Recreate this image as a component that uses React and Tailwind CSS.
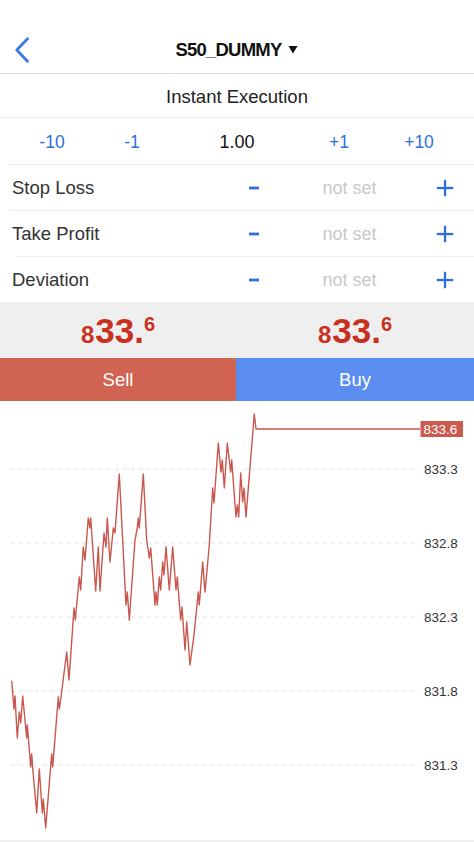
import React from "react";

const chartPoints = [
  [11.7, 680.7], [14, 709], [15, 696], [17.3, 738], [19.3, 712], [20.7, 723], [22.7, 696],
  [25, 720], [26.7, 738], [27.3, 725], [30.7, 767], [31.7, 754], [32.7, 768], [36.7, 813],
  [39.3, 769], [42.3, 813], [43.3, 799], [45.7, 828], [51.7, 754], [52.7, 767], [58.3, 697],
  [59.3, 709], [61, 697], [66.7, 652], [69, 680], [74, 608], [75.3, 620], [79.3, 577],
  [80.7, 590], [83.3, 547], [85, 560], [88.3, 518], [90, 528], [90.7, 518], [95.7, 591],
  [98.3, 547], [100, 591], [104, 533], [106, 547], [107.3, 518], [110, 562], [113.3, 528],
  [115, 533], [119.3, 474], [126, 605], [127.3, 592], [129.3, 620], [135, 540], [137.3, 528],
  [138.3, 518], [139.3, 528], [143.3, 474], [146.7, 540], [149.3, 558], [150.7, 548],
  [155, 605], [156, 592], [157.3, 605], [159.3, 577], [160.7, 590], [162.7, 562], [164, 575],
  [166, 547], [169.3, 590], [172.7, 547], [176, 590], [177.3, 577], [180.7, 620], [182, 607],
  [185, 650], [186.7, 622], [190, 665], [194, 635], [195.3, 622], [198.3, 592], [199.3, 605],
  [202.7, 562], [205, 592], [209.3, 545], [212.7, 488], [214, 503], [218.3, 443], [221, 472],
  [222.3, 460], [224.3, 488], [227.3, 443], [230.7, 472], [231.7, 460], [236, 517],
  [237.3, 505], [238.7, 517], [240.7, 473], [242.7, 502], [244, 488], [246, 517],
  [254.3, 414], [256, 429], [420, 429],
];

const gridLevels = [
  { y: 469, label: "833.3" },
  { y: 543, label: "832.8" },
  { y: 617, label: "832.3" },
  { y: 691, label: "831.8" },
  { y: 765, label: "831.3" },
];

const Minus = () => (
  <svg width="12" height="4" viewBox="0 0 12 4">
    <rect x="1" y="0.6" width="10" height="2.8" fill="#2f6fe0" />
  </svg>
);

const Plus = () => (
  <svg width="18" height="18" viewBox="0 0 18 18">
    <rect x="0.8" y="7.9" width="16.4" height="2.3" fill="#2f6fe0" />
    <rect x="7.9" y="0.8" width="2.3" height="16.4" fill="#2f6fe0" />
  </svg>
);

const LevelRow = ({ label, line }) => (
  <>
    <div className={`h-px bg-[#eeeeee] ${line}`} />
    <div className="h-[45px] grid grid-cols-[1fr_40px_151px_40px] items-center pl-[12px] pr-[9px] pt-[1px]">
      <span className="text-[18.5px] text-[#333333]">{label}</span>
      <span className="flex justify-center">
        <Minus />
      </span>
      <span className="text-center text-[18px] text-[#c8c8c8]">not set</span>
      <span className="flex justify-center">
        <Plus />
      </span>
    </div>
  </>
);

const Price = () => (
  <div className="flex items-baseline justify-center text-[#c9311f] font-bold leading-none">
    <span className="text-[24px] leading-none">8</span>
    <span className="text-[35px] leading-none ml-[1px]">33.</span>
    <span className="text-[20px] leading-none self-start mt-[1px]">6</span>
  </div>
);

const App = () => {
  const pts = chartPoints.map((p) => p.join(",")).join(" ");
  return (
    <div className="w-[474px] h-[842px] bg-white overflow-hidden font-['Liberation_Sans',Arial,sans-serif]">
      <div className="h-[26px]" />
      <header className="h-[47px] grid grid-cols-[1fr_auto_1fr] items-center">
        <div className="pl-[14px] flex items-center">
          <svg width="16" height="26" viewBox="0 0 16 26">
            <path d="M13.5 1.8 L2.8 13 L13.5 24.2" fill="none" stroke="#3a7be8" strokeWidth="2.8" strokeLinecap="round" strokeLinejoin="round" />
          </svg>
        </div>
        <div className="flex items-center gap-[7px]">
          <span className="text-[18.5px] font-bold tracking-[-0.8px] text-[#111111]">S50_DUMMY</span>
          <svg width="10" height="9" viewBox="0 0 10 9">
            <path d="M0.5 1 L9.5 1 L5 8.5 Z" fill="#111111" />
          </svg>
        </div>
        <div />
      </header>
      <div className="h-px bg-[#dcdcdc]" />
      <div className="h-[43px] flex items-center justify-center pt-[2px] text-[18.5px] text-[#222222]">
        Instant Execution
      </div>
      <div className="h-px bg-[#f0f0f0]" />
      <div className="h-[46px] grid grid-cols-[104px_56px_154px_50px_110px] items-center text-center text-[17.5px] pt-[3px]">
        <span className="text-[#2f6fe0]">-10</span>
        <span className="text-[#2f6fe0]">-1</span>
        <span className="text-[#111111] text-[18px]">1.00</span>
        <span className="text-[#2f6fe0]">+1</span>
        <span className="text-[#2f6fe0]">+10</span>
      </div>
      <LevelRow label="Stop Loss" line="ml-[8px]" />
      <LevelRow label="Take Profit" line="ml-[10px]" />
      <LevelRow label="Deviation" line="ml-[16px]" />
      <div className="h-[56px] bg-[#efefef] grid grid-cols-[236px_1fr] items-center">
        <Price />
        <Price />
      </div>
      <div className="h-[43px] grid grid-cols-[236px_1fr] text-white text-[18.5px]">
        <button type="button" className="bg-[#d06352] flex items-center justify-center">
          Sell
        </button>
        <button type="button" className="bg-[#5a8def] flex items-center justify-center">
          Buy
        </button>
      </div>
      <div className="h-[439px] relative">
        <svg width="474" height="439" viewBox="0 401 474 439" className="block">
          {gridLevels.map((g) => (
            <g key={g.label}>
              <line x1="11" y1={g.y} x2="418" y2={g.y} stroke="#e2e2e2" strokeWidth="1" strokeDasharray="4 4" />
              <text x="424" y={g.y + 5} fontSize="13.5" fill="#333333" fontFamily="Liberation Sans, Arial, sans-serif">
                {g.label}
              </text>
            </g>
          ))}
          <polyline points={pts} fill="none" stroke="#c9574d" strokeWidth="1.4" strokeLinejoin="round" />
          <rect x="420.5" y="421" width="42.5" height="16" fill="#cd5a4e" />
          <text x="423.5" y="434" fontSize="13.5" fill="#ffffff" fontFamily="Liberation Sans, Arial, sans-serif">
            833.6
          </text>
        </svg>
      </div>
      <div className="h-[3px] bg-[#efefef]" />
    </div>
  );
};

export default App;
